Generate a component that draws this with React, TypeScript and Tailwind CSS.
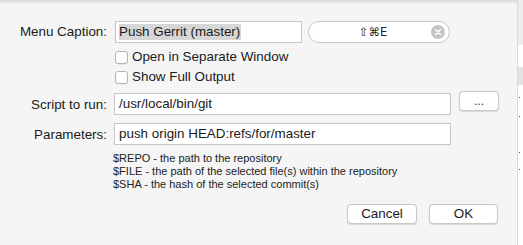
import React from "react";

const font = { fontFamily: '"Liberation Sans", Arial, sans-serif' };

function Checkbox({ label }: { label: string }) {
  return (
    <div className="flex items-center h-[16px]">
      <div className="w-[13px] h-[13px] rounded-[3px] bg-white border border-[#b3b3b3] shadow-[0_0.5px_0.5px_rgba(0,0,0,0.08)]" />
      <span className="ml-[4px] text-[13.4px] leading-[16px] text-[#1a1a1a]">{label}</span>
    </div>
  );
}

export default function App() {
  return (
    <div className="w-[523px] h-[245px] flex overflow-hidden bg-white" style={font}>
      <div className="w-[518px] h-[245px] bg-[#f5f5f5] border-r border-[#dadada] flex flex-col">
        <div className="h-[4px] bg-gradient-to-b from-[#d9d9d9] to-[#f5f5f5]" />
        {/* Row 1 */}
        <div className="mt-[17px] flex items-center h-[22px]">
          <div className="w-[107px] text-right text-[13.4px] text-[#1a1a1a] leading-[16px]">Menu Caption:</div>
          <div className="ml-[8px] w-[187px] h-[22px] bg-white border border-[#c6c6c6] flex items-center pl-[3px]">
            <span className="bg-[#d6d6d6] text-[13.4px] leading-[16px] text-[#1a1a1a] pr-[1px]">Push Gerrit (master)</span>
          </div>
          <div className="ml-[6px] w-[142px] h-[22px] bg-white border border-[#c6c6c6] rounded-full flex items-center">
            <div className="flex-1 text-center text-[11.5px] text-[#222] leading-[14px] pl-[6px]" style={{ fontFamily: '"DejaVu Sans", "Liberation Sans", sans-serif' }}>⇧⌘E</div>
            <div className="w-[14px] h-[14px] rounded-full bg-[#c4c4c4] mr-[4px] flex items-center justify-center">
              <svg width="8" height="8" viewBox="0 0 8 8">
                <path d="M1.5 1.5 L6.5 6.5 M6.5 1.5 L1.5 6.5" stroke="white" strokeWidth="1.5" strokeLinecap="round" />
              </svg>
            </div>
          </div>
        </div>
        {/* Checkboxes */}
        <div className="mt-[6px] ml-[115px] flex flex-col gap-[4px]">
          <Checkbox label="Open in Separate Window" />
          <Checkbox label="Show Full Output" />
        </div>
        {/* Script row */}
        <div className="mt-[8px] flex items-start h-[22px]">
          <div className="w-[107px] h-[22px] flex items-center justify-end text-[13.4px] text-[#1a1a1a] leading-[16px] pt-[2px]">Script to run:</div>
          <div className="ml-[7px] w-[337px] h-[22px] bg-white border border-[#c6c6c6] flex items-center pl-[4px] text-[13.4px] text-[#1a1a1a] leading-[16px]">/usr/local/bin/git</div>
          <div className="-mt-[2px] ml-[8px] w-[40px] h-[20px] bg-white border border-[#c8c8c8] rounded-[4px] shadow-[0_0.5px_1px_rgba(0,0,0,0.12)] flex items-center justify-center text-[12px] text-[#333] leading-[14px]">...</div>
        </div>
        {/* Parameters */}
        <div className="mt-[8px] flex items-center h-[22px]">
          <div className="w-[107px] text-right text-[13.4px] text-[#1a1a1a] leading-[16px] pt-[2px]">Parameters:</div>
          <div className="ml-[7px] w-[337px] h-[22px] bg-white border border-[#c6c6c6] flex items-center pl-[4px] text-[13.4px] text-[#1a1a1a] leading-[16px]">push origin HEAD:refs/for/master</div>
        </div>
        {/* Help */}
        <div className="mt-[7px] ml-[113px] text-[11px] leading-[13px] text-[#222]">
          <div>$REPO - the path to the repository</div>
          <div>$FILE - the path of the selected file(s) within the repository</div>
          <div>$SHA - the hash of the selected commit(s)</div>
        </div>
        {/* Buttons */}
        <div className="mt-[13px] flex justify-end pr-[19px] gap-[12px]">
          <div className="w-[70px] h-[20px] bg-white border border-[#c8c8c8] rounded-[4px] shadow-[0_0.5px_1px_rgba(0,0,0,0.12)] flex items-center justify-center text-[13.4px] text-[#1a1a1a] leading-[16px]">Cancel</div>
          <div className="w-[69px] h-[20px] bg-white border border-[#c8c8c8] rounded-[4px] shadow-[0_0.5px_1px_rgba(0,0,0,0.12)] flex items-center justify-center text-[13.4px] text-[#1a1a1a] leading-[16px]">OK</div>
        </div>
      </div>
      {/* Background window strip */}
      <div className="w-[5px] h-[245px] flex flex-col bg-white">
        <div className="h-[45px] bg-[#ececec]" />
        <div className="h-[22px] bg-white" />
        <div className="h-[18px] bg-[#e3e3e3]" />
        <div className="mt-[12px] ml-[1px] w-[1px] h-[1px] bg-[#555]" />
        <div className="mt-[18px] ml-[1px] w-[1px] h-[1px] bg-[#555]" />
        <div className="mt-[35px] ml-[1px] w-[1px] h-[1px] bg-[#555]" />
        <div className="mt-[16px] ml-[1px] w-[1px] h-[1px] bg-[#555]" />
      </div>
    </div>
  );
}
